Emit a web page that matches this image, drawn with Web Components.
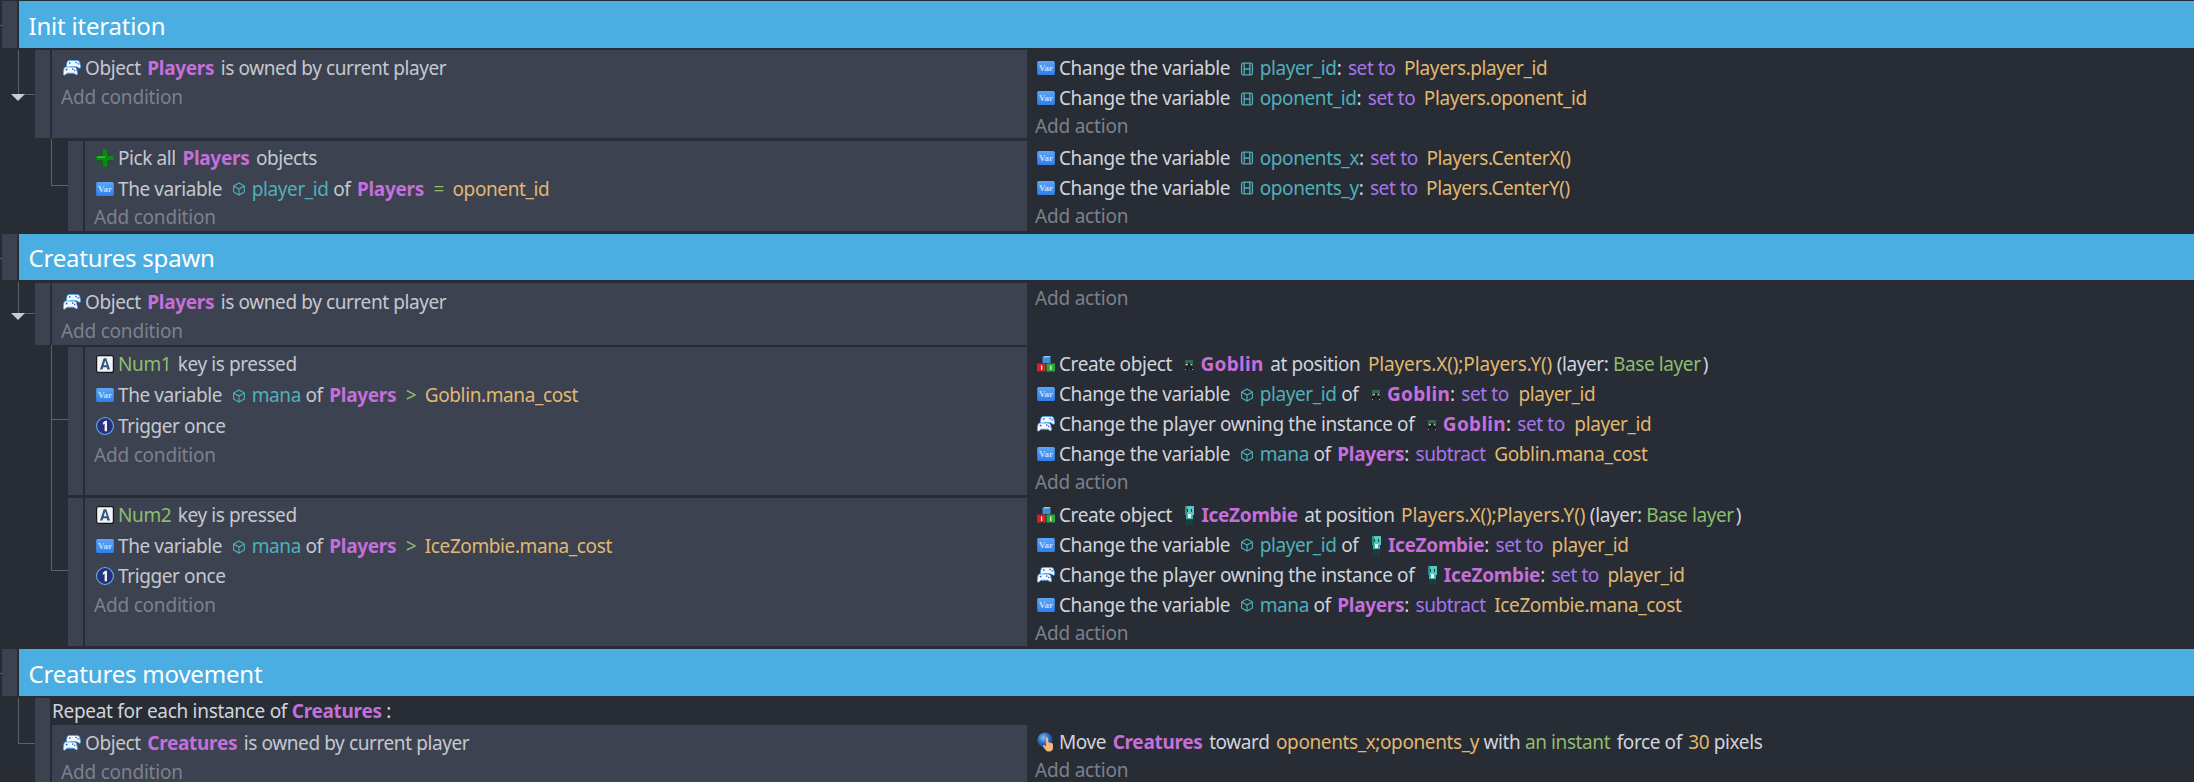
<!DOCTYPE html>
<html>
<head>
<meta charset="utf-8">
<title>Events sheet</title>
<style>
  html, body { margin: 0; height: 100%; background: #282c34; overflow: hidden; }
  body { font-family: "Noto Sans", sans-serif; padding-top: 1px; box-sizing: border-box; }
</style>
</head>
<body>
<gd-sheet>
  <gd-group title="Init iteration" style="--tail:45px;--arrow:1"></gd-group>
  <gd-event tree="first" style="--pad:3px;--apad:3px;--add-h:25px">
    <gd-line slot="cond" icon="pad">Object <b>Players</b> is owned by current player</gd-line>
    <gd-add slot="cond">Add condition</gd-add>
    <gd-line slot="act" icon="var">Change the variable <gd-icon name="film"></gd-icon><i class="v">player_id</i>: <u>set to</u> <em>Players.player_id</em></gd-line>
    <gd-line slot="act" icon="var">Change the variable <gd-icon name="film"></gd-icon><i class="v">oponent_id</i>: <u>set to</u> <em>Players.oponent_id</em></gd-line>
    <gd-add slot="act">Add action</gd-add>
  </gd-event>
  <gd-event sub>
    <gd-line slot="cond" icon="plus">Pick all <b>Players</b> objects</gd-line>
    <gd-line slot="cond" icon="var">The variable <gd-icon name="cube"></gd-icon><i class="v">player_id</i> of <b>Players</b> <s>=</s> <em>oponent_id</em></gd-line>
    <gd-add slot="cond">Add condition</gd-add>
    <gd-line slot="act" icon="var">Change the variable <gd-icon name="film"></gd-icon><i class="v">oponents_x</i>: <u>set to</u> <em>Players.CenterX()</em></gd-line>
    <gd-line slot="act" icon="var">Change the variable <gd-icon name="film"></gd-icon><i class="v">oponents_y</i>: <u>set to</u> <em>Players.CenterY()</em></gd-line>
    <gd-add slot="act">Add action</gd-add>
  </gd-event>

  <gd-group title="Creatures spawn" style="--tail:32px;--arrow:1;margin-top:3px"></gd-group>
  <gd-event tree="first" style="--pad:4px">
    <gd-line slot="cond" icon="pad">Object <b>Players</b> is owned by current player</gd-line>
    <gd-add slot="cond">Add condition</gd-add>
    <gd-add slot="act">Add action</gd-add>
  </gd-event>
  <gd-event sub trunk style="--branch:75px">
    <gd-line slot="cond" icon="key"><s>Num1</s> key is pressed</gd-line>
    <gd-line slot="cond" icon="var">The variable <gd-icon name="cube"></gd-icon><i class="v">mana</i> of <b>Players</b> <s>&gt;</s> <em>Goblin.mana_cost</em></gd-line>
    <gd-line slot="cond" icon="once">Trigger once</gd-line>
    <gd-add slot="cond">Add condition</gd-add>
    <gd-line slot="act" icon="create">Create object <gd-icon name="goblin"></gd-icon><b class="g">Goblin</b> at position <em class="w">Players.X();Players.Y()</em> (layer: <s>Base layer</s>)</gd-line>
    <gd-line slot="act" icon="var">Change the variable <gd-icon name="cube"></gd-icon><i class="v">player_id</i> of <gd-icon name="goblin"></gd-icon><b class="c g">Goblin</b>: <u>set to</u> <em>player_id</em></gd-line>
    <gd-line slot="act" icon="pad">Change the player owning the instance of <gd-icon name="goblin"></gd-icon><b class="c g">Goblin</b>: <u>set to</u> <em>player_id</em></gd-line>
    <gd-line slot="act" icon="var">Change the variable <gd-icon name="cube"></gd-icon><i class="v">mana</i> of <b class="c">Players</b>: <u>subtract</u> <em>Goblin.mana_cost</em></gd-line>
    <gd-add slot="act">Add action</gd-add>
  </gd-event>
  <gd-event sub style="--branch:75px">
    <gd-line slot="cond" icon="key"><s>Num2</s> key is pressed</gd-line>
    <gd-line slot="cond" icon="var">The variable <gd-icon name="cube"></gd-icon><i class="v">mana</i> of <b>Players</b> <s>&gt;</s> <em>IceZombie.mana_cost</em></gd-line>
    <gd-line slot="cond" icon="once">Trigger once</gd-line>
    <gd-add slot="cond">Add condition</gd-add>
    <gd-line slot="act" icon="create">Create object <gd-icon name="zombie"></gd-icon><b>IceZombie</b> at position <em class="w">Players.X();Players.Y()</em> (layer: <s>Base layer</s>)</gd-line>
    <gd-line slot="act" icon="var">Change the variable <gd-icon name="cube"></gd-icon><i class="v">player_id</i> of <gd-icon name="zombie"></gd-icon><b class="c">IceZombie</b>: <u>set to</u> <em>player_id</em></gd-line>
    <gd-line slot="act" icon="pad">Change the player owning the instance of <gd-icon name="zombie"></gd-icon><b class="c">IceZombie</b>: <u>set to</u> <em>player_id</em></gd-line>
    <gd-line slot="act" icon="var">Change the variable <gd-icon name="cube"></gd-icon><i class="v">mana</i> of <b class="c">Players</b>: <u>subtract</u> <em>IceZombie.mana_cost</em></gd-line>
    <gd-add slot="act">Add action</gd-add>
  </gd-event>

  <gd-group title="Creatures movement" style="--tail:46px;margin-top:3.9px"></gd-group>
  <gd-event repeat>
    <span slot="head">Repeat for each instance of <b>Creatures</b> :</span>
    <gd-line slot="cond" icon="pad">Object <b>Creatures</b> is owned by current player</gd-line>
    <gd-add slot="cond">Add condition</gd-add>
    <gd-line slot="act" icon="move">Move <b>Creatures</b> toward <em>oponents_x;oponents_y</em> with <s>an instant</s> force of <em>30</em> pixels</gd-line>
    <gd-add slot="act">Add action</gd-add>
  </gd-event>
</gd-sheet>

<script>
// pixel art and small glyphs for the instruction icons
const padShape = "M3 0h7.4c1.6 0 2.4.8 2.8 2.4l.8 4c.2 1.2-1.1 1.8-2 .9L10 6.2H3.6L1.6 7.8C.7 8.6-.5 8-.3 6.8L.3 2.4C.6.8 1.4 0 3 0z";
const ICONS = {
  pad: `<svg viewBox="0 0 18 16"><g stroke="#4aa8f0" stroke-width=".9" fill="#f6f9fd" stroke-linejoin="round">
      <path transform="translate(3.6 .5)" d="${padShape}"/>
      <path transform="translate(.5 7)" d="${padShape}"/></g>
      <g fill="#3350c8"><rect x="6" y="2.2" width="1.5" height="1.5"/><rect x="12.4" y="1.8" width="1.4" height="1.4"/><rect x="14.4" y="3.2" width="1.3" height="1.3"/>
      <rect x="2.8" y="8.8" width="1.6" height="1.6"/><rect x="9" y="8.4" width="1.4" height="1.4"/><rect x="11" y="9.8" width="1.3" height="1.3"/></g></svg>`,
  var: `<svg viewBox="0 0 18 16"><defs><linearGradient id="g" x1="0" y1="0" x2="0" y2="1"><stop offset="0" stop-color="#5ba6f7"/><stop offset="1" stop-color="#2f80ee"/></linearGradient></defs>
      <rect x=".2" y="1" width="17.6" height="14" rx="1.6" fill="url(#g)"/>
      <text x="9" y="11.2" text-anchor="middle" font-family="Liberation Serif, serif" font-size="9" font-weight="700" letter-spacing="0" fill="#c4dcfb">Var</text></svg>`,
  plus: `<svg viewBox="0 0 18 18"><path d="M6.5 0h5v6.5H18v5h-6.5V18h-5v-6.5H0v-5h6.5z" fill="#0a8a12" stroke="#056008" stroke-width=".6"/><path d="M7.6 1h1.6v6.5H1.2v1.3h8V1z" fill="#35d23f"/></svg>`,
  key: `<svg viewBox="0 0 18 18"><rect x=".6" y=".6" width="16.8" height="16.8" rx="2" fill="#f2f3f5" stroke="#14161a" stroke-width="1.2"/><path d="M7.7 3.2h2.6L14 14.6h-2.6l-.7-2.4H7.2l-.7 2.4H4zm-.0 7h3l-1.5-4.8z" fill="#33557f" fill-rule="evenodd"/></svg>`,
  once: `<svg viewBox="0 0 20 20"><circle cx="10" cy="10" r="9.4" fill="#25307f" stroke="#6aaee8" stroke-width="1.2"/><path d="M10.2 4.2h2v11.6H9.6V7.4L7.6 8.6V6.5z" fill="#f2f5fb"/></svg>`,
  create: `<svg viewBox="0 0 18 16"><path d="M5.5 1.5L7.5 0h6v7h-8z" fill="#3f8ed8"/><path d="M5.5 1.5L7.5 0h6l-2 1.5z" fill="#8cc8f4"/><path d="M0 7.5h8.5V15.5H0z" fill="#d2232a"/><path d="M9.5 7.5H18V15.5H9.5z" fill="#2fa83a"/><path d="M4 9.5h1.2V14H4zM13.2 9.5h1.2V14h-1.2z" fill="#f3f3f3"/></svg>`,
  goblin: `<svg viewBox="0 0 14 14" shape-rendering="crispEdges"><rect x="3" y="2" width="8" height="6" fill="#35664b"/><rect x="4" y="6" width="2" height="1" fill="#b9c9bd"/><rect x="9" y="6" width="1" height="1" fill="#b9c9bd"/><rect x="6" y="5" width="2" height="4" fill="#14181d"/><rect x="3" y="8" width="3" height="4" fill="#1a1e24"/><rect x="8" y="8" width="3" height="4" fill="#1a1e24"/><rect x="3" y="11" width="1" height="1" fill="#aab3ad"/><rect x="10" y="11" width="1" height="1" fill="#aab3ad"/></svg>`,
  zombie: `<svg viewBox="0 0 9 19" shape-rendering="crispEdges"><rect x="0" y="0" width="9" height="9" fill="#55c8c2"/><rect x="0" y="0" width="2" height="9" fill="#2e8f8a"/><rect x="2" y="3" width="1" height="3" fill="#14403c"/><rect x="6" y="3" width="1" height="3" fill="#14403c"/><rect x="1" y="9" width="7" height="4" fill="#3fb0aa"/><rect x="3" y="8" width="3" height="4" fill="#eef6f5"/><rect x="1" y="13" width="7" height="1" fill="#1d4f4c"/><rect x="1" y="14" width="3" height="5" fill="#1b3f3d"/><rect x="5" y="14" width="3" height="5" fill="#1b3f3d"/></svg>`,
  move: `<svg viewBox="0 0 18 20"><defs><radialGradient id="m" cx=".4" cy=".35" r=".7"><stop offset="0" stop-color="#7fc0f4"/><stop offset=".5" stop-color="#2f6fc4"/><stop offset="1" stop-color="#173a72"/></radialGradient></defs><circle cx="8" cy="8" r="7.6" fill="url(#m)"/><path d="M9 6.6c0-1.6 2.2-1.6 2.2 0v3.6l3.2.7c1.2.3 1.6 1 1.6 2.2v3c0 2-1.4 3.4-3.4 3.4h-1.2c-1.4 0-2.2-.6-3-1.8L6 14.5c-.6-1 .6-2 1.6-1.2L9 14.4z" fill="#f4b67c"/></svg>`,
  cube: `<svg viewBox="0 0 14 14" fill="none" stroke="#4fb0bb" stroke-width="1.1"><path d="M7 1l5.4 3v6L7 13l-5.4-3V4zM1.6 4L7 7l5.4-3M7 7v6"/></svg>`,
  film: `<svg viewBox="0 0 14 14" fill="none" stroke="#4fb0bb" stroke-width="1.3"><rect x="1.6" y="1.2" width="10.8" height="11.6" rx="1.6"/><path d="M4.2 1.2v11.6M9.8 1.2v11.6M4.2 7h5.6"/></svg>`
};

class GdIcon extends HTMLElement {
  connectedCallback() {
    const name = this.getAttribute("name");
    const sizes = { cube: [14, 14], film: [14, 14], goblin: [14, 14], zombie: [9, 19] };
    const margins = { goblin: "0 2px 0 6px", zombie: "0 5px 0 9px", cube: "0 6px 0 5px", film: "0 6px 0 5px" };
    const [w, h] = sizes[name] || [18, 18];
    this.attachShadow({ mode: "open" });
    this.shadowRoot.innerHTML = `
      <style>
        :host { display: inline-flex; align-items: center; justify-content: center; vertical-align: middle; margin: ${margins[name] || "0 6px"}; position: relative; top: -1px; }
        svg { width: ${w}px; height: ${h}px; display: block; }
      </style>${ICONS[name]}`;
  }
}

class GdLine extends HTMLElement {
  connectedCallback() {
    const icon = this.getAttribute("icon");
    const h = icon === "once" || icon === "move" ? 20 : 18;
    this.attachShadow({ mode: "open" });
    this.shadowRoot.innerHTML = `
      <style>
        :host { display: flex; align-items: center; height: var(--line-h, 30px); white-space: nowrap; color: var(--text, #d0d4dc); }
        .ic { flex: none; width: 18px; height: 18px; margin-right: 4px; display: flex; align-items: center; justify-content: center; }
        .ic svg { width: 18px; height: ${h}px; flex: none; display: block; }
      </style>
      <span class="ic">${ICONS[icon] || ""}</span>
      <span class="tx"><slot></slot></span>`;
  }
}

class GdAdd extends HTMLElement {
  connectedCallback() {
    this.attachShadow({ mode: "open" });
    this.shadowRoot.innerHTML = `
      <style>
        :host { display: flex; align-items: center; height: var(--add-h, 26px); color: #7c818c; margin-left: -2px; letter-spacing: -.2px; }
      </style><slot></slot>`;
  }
}

class GdGroup extends HTMLElement {
  connectedCallback() {
    this.attachShadow({ mode: "open" });
    this.shadowRoot.innerHTML = `
      <style>
        :host { display: flex; gap: 2px; height: 46.5px; margin-left: 2px; position: relative; }
        .grip { width: 15px; background: #3d4250; }
        .bar { flex: 1; background: #4aaee3; color: #fff; font-size: 24px; letter-spacing: -.2px; display: flex; align-items: center; padding: 1.5px 0 0 9.5px; box-sizing: border-box; }
        .tick { position: absolute; left: -2px; top: 24px; width: 2px; height: 1px; background: #5b606b; }
        .tail { position: absolute; left: 16px; top: 100%; margin-top: 2px; width: 17px; height: var(--tail); border-left: 1px solid #5b606b; border-bottom: 1px solid #5b606b; box-sizing: border-box; }
      </style>
      <div class="grip"></div>
      <div class="bar">${this.getAttribute("title")}</div>
      <i class="tick"></i><i class="tail"></i>`;
    this.removeAttribute("title");
    if (getComputedStyle(this).getPropertyValue("--arrow").trim() === "1") {
      const a = document.createElement("i");
      a.style.cssText = "position:absolute;left:9px;top:calc(100% + 2px + var(--tail) - 1px);width:0;height:0;border:7px solid transparent;border-top-color:#c9ccd1;border-bottom:0;";
      this.shadowRoot.appendChild(a);
    }
  }
}

class GdEvent extends HTMLElement {
  connectedCallback() {
    const sub = this.hasAttribute("sub");
    this.attachShadow({ mode: "open" });
    this.shadowRoot.innerHTML = `
      <style>
        :host { display: block; position: relative; margin: 2.5px 0; padding-left: ${sub ? 68 : 35}px; }
        .wrap { display: flex; gap: 2px; }
        .grip { width: 15px; flex: none; background: #3d4250; }
        .main { flex: 1; min-width: 0; }
        .head { line-height: 27px; height: 27px; color: #d0d4dc; letter-spacing: -.3px; }
        .row { display: flex; }
        .cond { width: ${sub ? 942 : 975}px; flex: none; box-sizing: border-box; background: #3d4250; padding: var(--pad, 2px) 0 0 11px; --line-h: 30.7px; --add-h: 27px; --text: #c5c8cf; }
        .act { flex: 1; padding: var(--apad, 2px) 0 0 10px; }
        .branch { position: absolute; left: 51px; top: -2px; width: 17px; height: var(--branch, 47px); border-left: 1px solid #5b606b; border-bottom: 1px solid #5b606b; box-sizing: border-box; }
        .trunk { position: absolute; left: 51px; top: -2px; bottom: -3px; border-left: 1px solid #5b606b; }
      </style>
      ${sub ? '<i class="branch"></i>' : ""}
      ${this.hasAttribute("trunk") ? '<i class="trunk"></i>' : ""}
      <div class="wrap">
        <div class="grip"></div>
        <div class="main">
          ${this.hasAttribute("repeat") ? '<div class="head"><slot name="head"></slot></div>' : ""}
          <div class="row">
            <div class="cond"><slot name="cond"></slot></div>
            <div class="act"><slot name="act"></slot></div>
          </div>
        </div>
      </div>`;
  }
}

class GdSheet extends HTMLElement {
  connectedCallback() {
    this.attachShadow({ mode: "open" });
    this.shadowRoot.innerHTML = `
      <style>
        :host { display: block; font-size: 19px; letter-spacing: -.4px; }
      </style><slot></slot>`;
    // inline parts of an instruction, light DOM so they stay with the line
    const style = document.createElement("style");
    style.textContent = `
      gd-line b { color: #c46fdb; font-weight: 700; margin: 0 2px; letter-spacing: -.3px; }
      gd-line b.c { margin-right: 0; }
      gd-line b.g { letter-spacing: .3px; }
      gd-line i.v { font-style: normal; color: #4fb0bb; }
      gd-line em { font-style: normal; color: #e0b870; margin-left: 2px; }
      gd-line em.w { letter-spacing: -.15px; }
      gd-line b.g ~ em { margin-left: 3px; }
      gd-line u { text-decoration: none; color: #a874ee; margin: 0 2px; }
      gd-line s { text-decoration: none; color: #8dbd6e; margin: 0 2px 0 0; }
      gd-line b + s { margin-left: 3px; }
      gd-event b { color: #c46fdb; }
    `;
    document.head.appendChild(style);
  }
}

customElements.define("gd-icon", GdIcon);
customElements.define("gd-line", GdLine);
customElements.define("gd-add", GdAdd);
customElements.define("gd-group", GdGroup);
customElements.define("gd-event", GdEvent);
customElements.define("gd-sheet", GdSheet);
</script>
</body>
</html>
